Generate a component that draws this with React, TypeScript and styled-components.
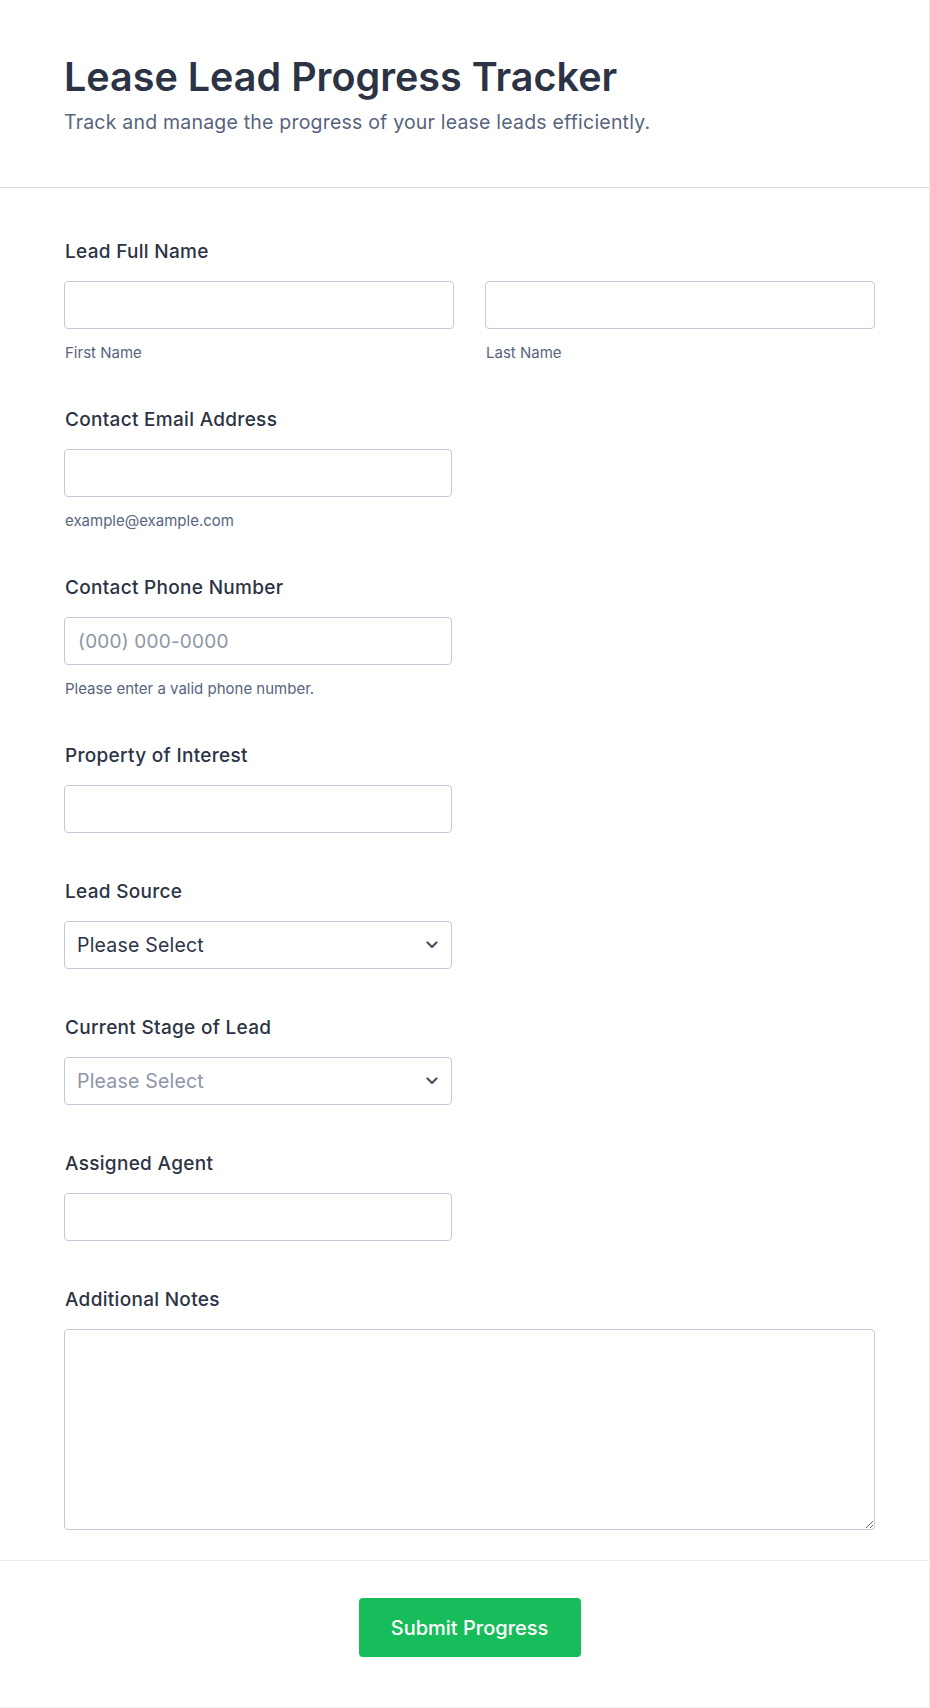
import React from 'react';
import styled, { createGlobalStyle } from 'styled-components';

const GlobalStyle = createGlobalStyle`
  * {
    box-sizing: border-box;
  }
  body {
    margin: 0;
    background: #ffffff;
    font-family: Inter, "Noto Sans", "Liberation Sans", sans-serif;
    color: #2c3345;
  }
`;

const Page = styled.div`
  width: 930px;
  min-height: 1708px;
  background: #ffffff;
  border-right: 1px solid #f0f1f5;
  border-bottom: 1px solid #f0f1f5;
  display: flex;
  flex-direction: column;
`;

const Header = styled.header`
  padding: 54px 54px 51px 64px;
  border-bottom: 1px solid #d8dae3;
`;

const Title = styled.h1`
  margin: 0;
  font-size: 39.5px;
  line-height: 46px;
  font-weight: 600;
  color: #2c3345;
`;

const Subtitle = styled.p`
  margin: 9px 0 0;
  font-size: 19.5px;
  line-height: 27px;
  font-weight: 400;
  letter-spacing: 0.2px;
  color: #57647e;
`;

const Form = styled.form`
  display: flex;
  flex-direction: column;
  flex: 1;
`;

const Fields = styled.div`
  display: flex;
  flex-direction: column;
  gap: 47px;
  padding: 52px 54px 30px 64px;
`;

const Field = styled.div`
  display: flex;
  flex-direction: column;
`;

const Label = styled.label`
  font-size: 19px;
  line-height: 24px;
  font-weight: 500;
  letter-spacing: 0.3px;
  color: #2c3345;
  margin: 0 0 17px 1px;
`;

const NameRow = styled.div`
  display: grid;
  grid-template-columns: 1fr 1fr;
  column-gap: 31px;
`;

const Column = styled.div<{ $half?: boolean }>`
  display: flex;
  flex-direction: column;
  width: ${({ $half }) => ($half ? '388px' : 'auto')};
`;

const Input = styled.input`
  width: 100%;
  height: 48px;
  padding: 0 13px;
  border: 1px solid #c3cad8;
  border-radius: 4px;
  background: #ffffff;
  font-family: inherit;
  font-size: 19px;
  letter-spacing: 0.2px;
  color: #2c3345;
  outline: none;

  &::placeholder {
    color: #8d95a6;
  }
`;

const SubLabel = styled.span`
  margin: 16px 0 0 1px;
  font-size: 15px;
  line-height: 16px;
  color: #57647e;
`;

const SelectWrap = styled.div`
  position: relative;
  width: 388px;
`;

const Select = styled.select<{ $muted?: boolean }>`
  width: 100%;
  height: 48px;
  padding: 0 40px 0 12px;
  border: 1px solid #c3cad8;
  border-radius: 4px;
  background: #ffffff;
  font-family: inherit;
  font-size: 19.5px;
  letter-spacing: 0.2px;
  color: ${({ $muted }) => ($muted ? '#8d95a6' : '#2c3345')};
  appearance: none;
  -webkit-appearance: none;
  outline: none;
`;

const Chevron = styled.svg`
  position: absolute;
  right: 14px;
  top: 50%;
  transform: translateY(-50%);
  pointer-events: none;
`;

const TextArea = styled.textarea`
  width: 100%;
  height: 201px;
  padding: 12px 13px;
  border: 1px solid #c3cad8;
  border-radius: 4px;
  font-family: inherit;
  font-size: 18px;
  color: #2c3345;
  outline: none;
  resize: vertical;
`;

const Footer = styled.div`
  border-top: 1px solid #e9eaf0;
  padding: 37px 54px 49px 64px;
  display: flex;
  justify-content: center;
`;

const SubmitButton = styled.button`
  width: 222px;
  height: 59px;
  border: none;
  border-radius: 4px;
  background: #18bd5b;
  color: #ffffff;
  font-family: inherit;
  font-size: 20px;
  font-weight: 500;
  cursor: pointer;
`;

const ChevronIcon = () => (
  <Chevron width="12" height="8" viewBox="0 0 12 8" fill="none">
    <path
      d="M1.5 1.5L6 6L10.5 1.5"
      stroke="#4a5369"
      strokeWidth="2.2"
      strokeLinecap="round"
      strokeLinejoin="round"
    />
  </Chevron>
);

type DropProps = { id: string; muted?: boolean };
const Dropdown = ({ id, muted }: DropProps) => (
  <SelectWrap>
    <Select id={id} $muted={muted} defaultValue="">
      <option value="">Please Select</option>
    </Select>
    <ChevronIcon />
  </SelectWrap>
);

export default function App() {
  return (
    <>
      <GlobalStyle />
      <Page>
        <Header>
          <Title>Lease Lead Progress Tracker</Title>
          <Subtitle>Track and manage the progress of your lease leads efficiently.</Subtitle>
        </Header>
        <Form onSubmit={(e) => e.preventDefault()}>
          <Fields>
            <Field>
              <Label>Lead Full Name</Label>
              <NameRow>
                <Column>
                  <Input type="text" />
                  <SubLabel>First Name</SubLabel>
                </Column>
                <Column>
                  <Input type="text" />
                  <SubLabel>Last Name</SubLabel>
                </Column>
              </NameRow>
            </Field>

            <Field>
              <Label>Contact Email Address</Label>
              <Column $half>
                <Input type="email" />
                <SubLabel>example@example.com</SubLabel>
              </Column>
            </Field>

            <Field>
              <Label>Contact Phone Number</Label>
              <Column $half>
                <Input type="tel" placeholder="(000) 000-0000" />
                <SubLabel>Please enter a valid phone number.</SubLabel>
              </Column>
            </Field>

            <Field>
              <Label>Property of Interest</Label>
              <Column $half>
                <Input type="text" />
              </Column>
            </Field>

            <Field>
              <Label htmlFor="lead-source">Lead Source</Label>
              <Dropdown id="lead-source" />
            </Field>

            <Field>
              <Label htmlFor="lead-stage">Current Stage of Lead</Label>
              <Dropdown id="lead-stage" muted />
            </Field>

            <Field>
              <Label>Assigned Agent</Label>
              <Column $half>
                <Input type="text" />
              </Column>
            </Field>

            <Field>
              <Label>Additional Notes</Label>
              <TextArea />
            </Field>
          </Fields>
          <Footer>
            <SubmitButton type="submit">Submit Progress</SubmitButton>
          </Footer>
        </Form>
      </Page>
    </>
  );
}
